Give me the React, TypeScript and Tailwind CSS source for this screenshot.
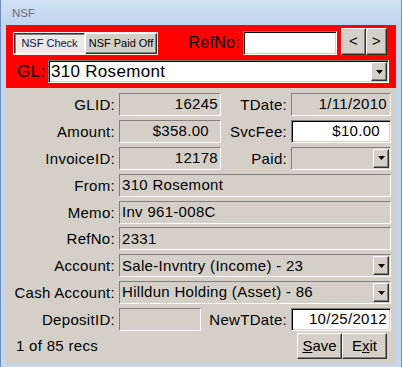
import type { ReactNode } from 'react';

const FONT = "font-['Liberation_Sans',Arial,sans-serif]";

// classic 3D borders
const sunken = 'border border-t-[#808080] border-l-[#808080] border-b-white border-r-white';
const sunkenDeep =
  'border border-t-[#808080] border-l-[#808080] border-b-white border-r-white shadow-[inset_1px_1px_0_#000,inset_-1px_-1px_0_#d4d0c8]';
const raised =
  'border border-t-white border-l-white border-b-[#303030] border-r-[#303030] shadow-[inset_-1px_-1px_0_#808080]';

function DropButton() {
  return (
    <div className={`ml-auto mr-[1px] h-[19px] w-[16px] shrink-0 flex items-center justify-center bg-[#d4d0c8] ${raised}`}>
      <svg width="7" height="4" viewBox="0 0 7 4">
        <path d="M0 0h7L3.5 4z" fill="#000" />
      </svg>
    </div>
  );
}

function Label({ children, w = 109 }: { children: ReactNode; w?: number }) {
  return (
    <div
      className="shrink-0 text-right pr-[4px] text-[15px] tracking-[0.3px] text-black leading-none whitespace-nowrap"
      style={{ width: w + 4 }}
    >
      {children}
    </div>
  );
}

function Field({
  value,
  width,
  align = 'left',
  white = false,
  drop = false,
  pr = 2,
}: {
  value?: string;
  width: number;
  align?: 'left' | 'right';
  white?: boolean;
  drop?: boolean;
  pr?: number;
}) {
  return (
    <div
      className={`h-[23px] flex items-center shrink-0 text-[15px] tracking-[0.3px] text-black ${
        white ? `bg-white ${sunkenDeep}` : `bg-[#d4d0c8] ${sunken}`
      }`}
      style={{ width }}
    >
      <span
        className={`flex-1 whitespace-nowrap pl-[2px] ${align === 'right' ? 'text-right' : 'text-left'}`}
        style={{ paddingRight: pr }}
      >
        {value}
      </span>
      {drop && <DropButton />}
    </div>
  );
}

export default function App() {
  return (
    <div className={`${FONT} w-[402px] h-[367px] bg-[#c4d7ef] border-x border-[#6f8db8] flex flex-col overflow-hidden`}>
      {/* Title bar */}
      <div className="h-[25px] shrink-0 flex items-center pl-[11px] bg-gradient-to-b from-[#d2e1f3] to-[#c0d4ee]">
        <span className="text-[11.5px] text-[#6b6b80] mt-[2px]">NSF</span>
      </div>

      {/* Client area */}
      <div className="mx-[5px] h-[339px] bg-[#d4d0c8] flex flex-col">
        {/* Red header */}
        <div className="bg-[#ff0000] h-[63px] shrink-0 flex flex-col pt-[3px]">
          <div className="flex items-center h-[27px]">
            <div className="ml-[7px] mt-[4px] h-[23px] w-[145px] border border-[#f0f0f0] flex">
              <div className="w-[71px] h-full flex items-center justify-center whitespace-nowrap bg-[#ebe9e4] border border-t-[#303030] border-l-[#303030] border-b-white border-r-white shadow-[inset_1px_1px_0_#808080] text-[11px] text-[#101050]">
                NSF Check
              </div>
              <div className={`flex-1 h-full flex items-center justify-center whitespace-nowrap bg-[#d4d0c8] ${raised} text-[11px] text-black`}>
                NSF Paid Off
              </div>
            </div>
            <div className="ml-auto text-[16px] tracking-[0.3px] text-black mt-[3px]">RefNo:</div>
            <div className={`ml-[3px] mt-[3px] h-[24px] w-[94px] bg-white ${sunkenDeep}`} />
            <div className="ml-[4px] mr-[9px] flex h-[27px]">
              <div className={`w-[25px] h-full flex items-center justify-center bg-[#d4d0c8] ${raised} text-[15px]`}>&lt;</div>
              <div className={`w-[21px] h-full flex items-center justify-center bg-[#d4d0c8] ${raised} text-[15px]`}>&gt;</div>
            </div>
          </div>
          <div className="flex items-center mt-[5px] h-[23px]">
            <div className="w-[42px] text-right pr-[2px] text-[17px] tracking-[0.5px] text-black">GL:</div>
            <div className={`h-[23px] w-[341px] flex items-center bg-white ${sunkenDeep}`}>
              <span className="flex-1 pl-[2px] text-[17px] tracking-[0.3px] text-black whitespace-nowrap">310 Rosemont</span>
              <DropButton />
            </div>
          </div>
        </div>

        {/* Form rows */}
        <div className="flex flex-col gap-[3.9px] pt-[5px]">
          <div className="flex items-center">
            <Label>GLID:</Label>
            <Field value="16245" width={102} align="right" />
            <Label w={66}>TDate:</Label>
            <Field value="1/11/2010" width={100} align="right" pr={3} />
          </div>
          <div className="flex items-center">
            <Label>Amount:</Label>
            <Field value="$358.00" width={102} align="right" pr={11} />
            <Label w={66}>SvcFee:</Label>
            <Field value="$10.00" width={100} align="right" white pr={10} />
          </div>
          <div className="flex items-center">
            <Label>InvoiceID:</Label>
            <Field value="12178" width={102} align="right" />
            <Label w={66}>Paid:</Label>
            <Field width={100} drop />
          </div>
          <div className="flex items-center">
            <Label>From:</Label>
            <Field value="310 Rosemont" width={272} />
          </div>
          <div className="flex items-center">
            <Label>Memo:</Label>
            <Field value="Inv 961-008C" width={272} />
          </div>
          <div className="flex items-center">
            <Label>RefNo:</Label>
            <Field value="2331" width={272} />
          </div>
          <div className="flex items-center">
            <Label>Account:</Label>
            <Field value="Sale-Invntry (Income) - 23" width={272} drop />
          </div>
          <div className="flex items-center">
            <Label>Cash Account:</Label>
            <Field value="Hilldun Holding (Asset) - 86" width={272} drop />
          </div>
          <div className="flex items-center">
            <Label>DepositID:</Label>
            <Field width={82} />
            <Label w={86}>NewTDate:</Label>
            <Field value="10/25/2012" width={100} align="right" white pr={3} />
          </div>
        </div>

        {/* Footer */}
        <div className="flex items-center mt-[2px] h-[26px]">
          <span className="pl-[10px] text-[15px] tracking-[0.3px] text-black">1 of 85 recs</span>
          <div className="ml-auto mr-[9px] flex h-[26px]">
            <div className={`w-[45px] h-full flex items-center justify-center bg-[#d4d0c8] ${raised} text-[15px]`}>
              <span><u>S</u>ave</span>
            </div>
            <div className={`w-[45px] h-full flex items-center justify-center bg-[#d4d0c8] ${raised} text-[15px]`}>
              <span>E<u>x</u>it</span>
            </div>
          </div>
        </div>
      </div>
    </div>
  );
}
